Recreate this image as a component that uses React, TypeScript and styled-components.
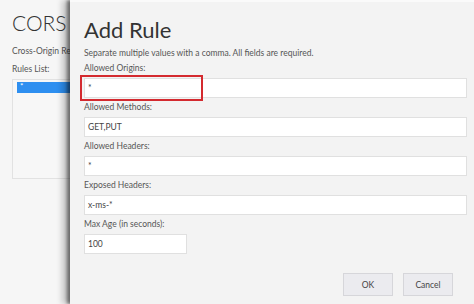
import React from "react";
import styled, { createGlobalStyle } from "styled-components";

const GlobalStyle = createGlobalStyle`
  html, body {
    margin: 0;
    padding: 0;
    width: 474px;
    height: 304px;
    overflow: hidden;
    background: #f5f5f5;
  }
  * { box-sizing: border-box; }
`;

const Page = styled.div`
  position: relative;
  width: 474px;
  height: 304px;
  overflow: hidden;
  font-family: "Lato", "Liberation Sans", sans-serif;
  color: #555;
  background: #f6f6f6;
`;

const BackPane = styled.div`
  display: flex;
  flex-direction: column;
  padding: 10px 0 0 12px;
  width: 70px;
  overflow: hidden;
`;

const BackTitle = styled.h1`
  margin: 0;
  font-size: 21px;
  font-weight: 300;
  color: #333;
  line-height: 26px;
  white-space: nowrap;
`;

const SmallText = styled.div<{ $top?: number }>`
  margin-top: ${(p) => p.$top ?? 0}px;
  font-size: 8.5px;
  line-height: 12px;
  color: #555;
  white-space: nowrap;
`;

const RulesBox = styled.div`
  margin-top: 4px;
  width: 200px;
  height: 100px;
  border: 1px solid #e2e2e2;
  background: #f7f7f7;
  padding: 2px 4px;
`;

const RuleItem = styled.div`
  height: 11px;
  background: #2e8ff0;
  color: #fff;
  font-size: 8px;
  line-height: 9px;
  padding-left: 3px;
`;

const Dialog = styled.div`
  position: absolute;
  left: 70px;
  top: 0;
  right: 0;
  bottom: 0;
  background: #f3f3f3;
  border-top: 2px solid #fafafa;
  box-shadow: -3px 0 3px rgba(0, 0, 0, 0.45), -8px 0 6px rgba(0, 0, 0, 0.2);
  display: flex;
  flex-direction: column;
  padding: 15px 7px 0 14px;
`;

const Title = styled.h2`
  margin: 0;
  font-size: 22px;
  font-weight: 400;
  color: #333;
  line-height: 26px;
`;

const Description = styled.p`
  margin: 4px 0 0;
  font-size: 8.5px;
  line-height: 12px;
  color: #555;
`;

const Field = styled.div`
  position: relative;
  display: flex;
  flex-direction: column;
`;

const Label = styled.label`
  font-size: 8.5px;
  line-height: 19px;
  height: 19px;
  color: #555;
`;

const Input = styled.div<{ $width?: number }>`
  width: ${(p) => (p.$width ? `${p.$width}px` : "100%")};
  height: 20px;
  background: #fff;
  border: 1px solid #e0e0e0;
  font-size: 8.5px;
  line-height: 18px;
  padding-left: 3px;
  color: #444;
`;

const Highlight = styled.div`
  position: absolute;
  left: -4px;
  top: 16px;
  width: 123px;
  height: 26px;
  border: 2px solid #d42a2f;
`;

const Footer = styled.div`
  margin-top: auto;
  display: flex;
  justify-content: flex-end;
  gap: 10px;
  padding: 0 14px 8px 0;
`;

const Button = styled.button`
  width: 50px;
  height: 23px;
  background: #ebebef;
  border: 1px solid #d6d6da;
  font-family: inherit;
  font-size: 8.5px;
  color: #444;
  padding: 0;
`;

const fields = [
  { label: "Allowed Origins:", value: "*" },
  { label: "Allowed Methods:", value: "GET,PUT" },
  { label: "Allowed Headers:", value: "*" },
  { label: "Exposed Headers:", value: "x-ms-*" },
];

export default function App() {
  return (
    <Page>
      <GlobalStyle />
      <BackPane>
        <BackTitle>CORS Settings</BackTitle>
        <SmallText $top={9}>Cross-Origin Resource Sharing</SmallText>
        <SmallText $top={6}>Rules List:</SmallText>
        <RulesBox>
          <RuleItem>*</RuleItem>
        </RulesBox>
      </BackPane>
      <Dialog>
        <Title>Add Rule</Title>
        <Description>Separate multiple values with a comma. All fields are required.</Description>
        {fields.map((f, i) => (
          <Field key={f.label}>
            <Label>{f.label}</Label>
            <Input>{f.value}</Input>
            {i === 0 && <Highlight />}
          </Field>
        ))}
        <Field>
          <Label>Max Age (in seconds):</Label>
          <Input $width={103}>100</Input>
        </Field>
        <Footer>
          <Button>OK</Button>
          <Button>Cancel</Button>
        </Footer>
      </Dialog>
    </Page>
  );
}
